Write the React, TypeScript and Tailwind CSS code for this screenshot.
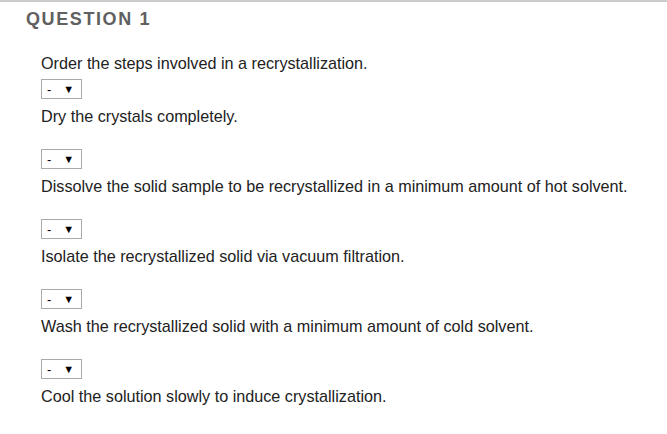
const steps = [
  'Dry the crystals completely.',
  'Dissolve the solid sample to be recrystallized in a minimum amount of hot solvent.',
  'Isolate the recrystallized solid via vacuum filtration.',
  'Wash the recrystallized solid with a minimum amount of cold solvent.',
  'Cool the solution slowly to induce crystallization.',
];

const OrderSelect = () => (
  <div className="flex h-[20px] w-[41px] items-center border border-[#a9a9a9] bg-white pl-[5px] text-[13px] leading-none text-black">
    <span>-</span>
    <span className="ml-[12px] text-[11px]">▼</span>
  </div>
);

export default function App() {
  return (
    <div className="min-h-screen w-[667px] bg-white font-['Liberation_Sans',Arial,sans-serif]">
      <div className="h-[2px] bg-[#cccccc]" />
      <h1 className="ml-[26px] mt-[8px] text-[18px] font-bold leading-[18px] tracking-[1.6px] text-[#606060]">
        QUESTION 1
      </h1>
      <div className="ml-[41px] mt-[26px] text-[16.2px] text-[#222222]">
        <p className="leading-[18px]">Order the steps involved in a recrystallization.</p>
        {steps.map((step, i) => (
          <div key={i} className={i === 0 ? 'mt-[7px]' : 'mt-[24px]'}>
            <OrderSelect />
            <p className="mt-[8px] leading-[18px]">{step}</p>
          </div>
        ))}
      </div>
    </div>
  );
}
